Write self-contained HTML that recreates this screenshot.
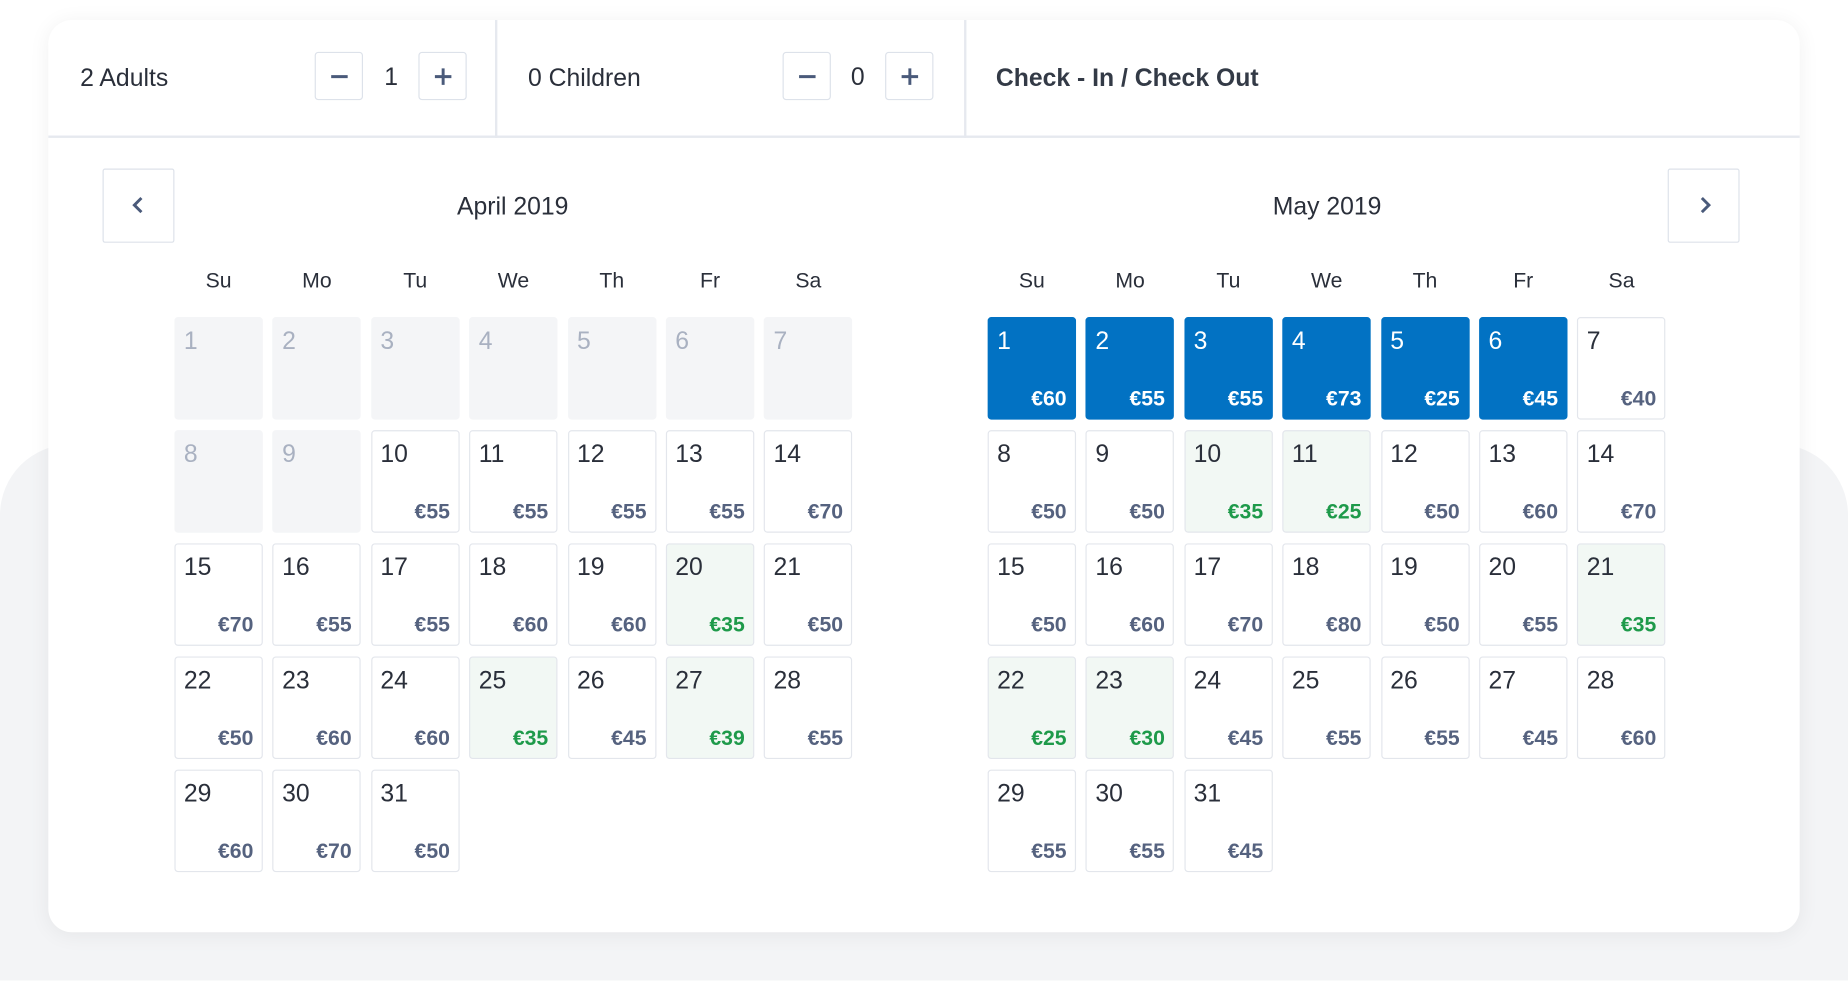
<!DOCTYPE html>
<html><head><meta charset="utf-8"><style>
*{box-sizing:border-box;margin:0;padding:0}
html,body{width:1848px;height:981px;overflow:hidden;background:#fff;font-family:"Liberation Sans",sans-serif}
#s{position:absolute;left:0;top:0;width:1568px;height:832px;transform:scale(1.17857);transform-origin:0 0;overflow:hidden}
.bg{position:absolute;left:0;top:377px;width:1568px;height:455px;background:#f3f4f6;border-radius:60px 60px 0 0}
.card{position:absolute;left:41px;top:17px;width:1486px;height:774px;background:#fff;border-radius:20px;box-shadow:0 2px 18px rgba(0,0,0,.06)}
.hdr{position:absolute;left:0;top:0;width:1486px;height:100px;border-bottom:2px solid #e6e9ef}
.vd{position:absolute;top:0;width:2px;height:100px;background:#e6e9ef}
.t{position:absolute;font-size:21px;color:#2a2f3a;line-height:24px}
.btn{position:absolute;width:41px;height:41px;border:1.5px solid #dde2ea;border-radius:3px;top:27px}
.btn svg{position:absolute;left:11px;top:11px}
.nav{position:absolute;width:61px;height:63px;border:1.5px solid #dde2ea;border-radius:2px;top:126px}
.nav svg{position:absolute;left:22px;top:22px}
.mt{position:absolute;top:147px;font-size:21px;color:#2a2f3a;width:300px;text-align:center}
.wd{position:absolute;top:211px;display:grid;grid-template-columns:repeat(7,75px);column-gap:8.4px;font-size:18px;color:#2a2f3a;text-align:center}
.g{position:absolute;top:252px;display:grid;grid-template-columns:repeat(7,75px);grid-auto-rows:87px;column-gap:8.4px;row-gap:9px}
.c{position:relative;border:1.5px solid #e3e6ec;border-radius:3px;background:#fff}
.c b{position:absolute;left:7px;top:8px;font-weight:400;font-size:21px;color:#2a2f3a}
.c i{position:absolute;right:7px;bottom:6px;font-style:normal;font-size:18px;font-weight:bold;color:#55627f}
.d{background:#f4f5f7;border-color:#f4f5f7}.d b{color:#a9b1c1}
.gr{background:#f2f8f4}.gr i{color:#1e9a4a}
.s{background:#0272c3;border-color:#0272c3}.s b,.s i{color:#fff}
</style></head><body><div id="s">
<div class="bg"></div>
<div class="card">
<div class="hdr">
<div class="t" style="left:27px;top:38px">2 Adults</div>
<div class="btn" style="left:226px"><svg width="18" height="18"><path d="M2 9h14" stroke="#4a5a7a" stroke-width="2.5"/></svg></div>
<div class="t" style="left:285px;top:37px">1</div>
<div class="btn" style="left:314px"><svg width="18" height="18"><path d="M2 9h14M9 2v14" stroke="#4a5a7a" stroke-width="2.5"/></svg></div>
<div class="vd" style="left:379px"></div>
<div class="t" style="left:407px;top:38px">0 Children</div>
<div class="btn" style="left:623px"><svg width="18" height="18"><path d="M2 9h14" stroke="#4a5a7a" stroke-width="2.5"/></svg></div>
<div class="t" style="left:681px;top:37px">0</div>
<div class="btn" style="left:710px"><svg width="18" height="18"><path d="M2 9h14M9 2v14" stroke="#4a5a7a" stroke-width="2.5"/></svg></div>
<div class="vd" style="left:777px"></div>
<div class="t" style="left:804px;top:38px;font-weight:bold;font-size:21px;color:#333a46">Check - In / Check Out</div>
</div>
<div class="nav" style="left:46px"><svg width="16" height="16"><path d="M10 2L4 8l6 6" stroke="#4a5a7a" stroke-width="2.5" fill="none"/></svg></div>
<div class="nav" style="left:1374px"><svg width="16" height="16"><path d="M6 2l6 6-6 6" stroke="#4a5a7a" stroke-width="2.5" fill="none"/></svg></div>
<div class="mt" style="left:244px">April 2019</div>
<div class="mt" style="left:935px">May 2019</div>
<div class="wd" style="left:107px"><span>Su</span><span>Mo</span><span>Tu</span><span>We</span><span>Th</span><span>Fr</span><span>Sa</span></div>
<div class="wd" style="left:797px"><span>Su</span><span>Mo</span><span>Tu</span><span>We</span><span>Th</span><span>Fr</span><span>Sa</span></div>
<div class="g" style="left:107px">
<div class="c d"><b>1</b></div><div class="c d"><b>2</b></div><div class="c d"><b>3</b></div><div class="c d"><b>4</b></div><div class="c d"><b>5</b></div><div class="c d"><b>6</b></div><div class="c d"><b>7</b></div>
<div class="c d"><b>8</b></div><div class="c d"><b>9</b></div><div class="c"><b>10</b><i>€55</i></div><div class="c"><b>11</b><i>€55</i></div><div class="c"><b>12</b><i>€55</i></div><div class="c"><b>13</b><i>€55</i></div><div class="c"><b>14</b><i>€70</i></div>
<div class="c"><b>15</b><i>€70</i></div><div class="c"><b>16</b><i>€55</i></div><div class="c"><b>17</b><i>€55</i></div><div class="c"><b>18</b><i>€60</i></div><div class="c"><b>19</b><i>€60</i></div><div class="c gr"><b>20</b><i>€35</i></div><div class="c"><b>21</b><i>€50</i></div>
<div class="c"><b>22</b><i>€50</i></div><div class="c"><b>23</b><i>€60</i></div><div class="c"><b>24</b><i>€60</i></div><div class="c gr"><b>25</b><i>€35</i></div><div class="c"><b>26</b><i>€45</i></div><div class="c gr"><b>27</b><i>€39</i></div><div class="c"><b>28</b><i>€55</i></div>
<div class="c"><b>29</b><i>€60</i></div><div class="c"><b>30</b><i>€70</i></div><div class="c"><b>31</b><i>€50</i></div>
</div>
<div class="g" style="left:797px">
<div class="c s"><b>1</b><i>€60</i></div><div class="c s"><b>2</b><i>€55</i></div><div class="c s"><b>3</b><i>€55</i></div><div class="c s"><b>4</b><i>€73</i></div><div class="c s"><b>5</b><i>€25</i></div><div class="c s"><b>6</b><i>€45</i></div><div class="c"><b>7</b><i>€40</i></div>
<div class="c"><b>8</b><i>€50</i></div><div class="c"><b>9</b><i>€50</i></div><div class="c gr"><b>10</b><i>€35</i></div><div class="c gr"><b>11</b><i>€25</i></div><div class="c"><b>12</b><i>€50</i></div><div class="c"><b>13</b><i>€60</i></div><div class="c"><b>14</b><i>€70</i></div>
<div class="c"><b>15</b><i>€50</i></div><div class="c"><b>16</b><i>€60</i></div><div class="c"><b>17</b><i>€70</i></div><div class="c"><b>18</b><i>€80</i></div><div class="c"><b>19</b><i>€50</i></div><div class="c"><b>20</b><i>€55</i></div><div class="c gr"><b>21</b><i>€35</i></div>
<div class="c gr"><b>22</b><i>€25</i></div><div class="c gr"><b>23</b><i>€30</i></div><div class="c"><b>24</b><i>€45</i></div><div class="c"><b>25</b><i>€55</i></div><div class="c"><b>26</b><i>€55</i></div><div class="c"><b>27</b><i>€45</i></div><div class="c"><b>28</b><i>€60</i></div>
<div class="c"><b>29</b><i>€55</i></div><div class="c"><b>30</b><i>€55</i></div><div class="c"><b>31</b><i>€45</i></div>
</div>
</div>
</div></body></html>
